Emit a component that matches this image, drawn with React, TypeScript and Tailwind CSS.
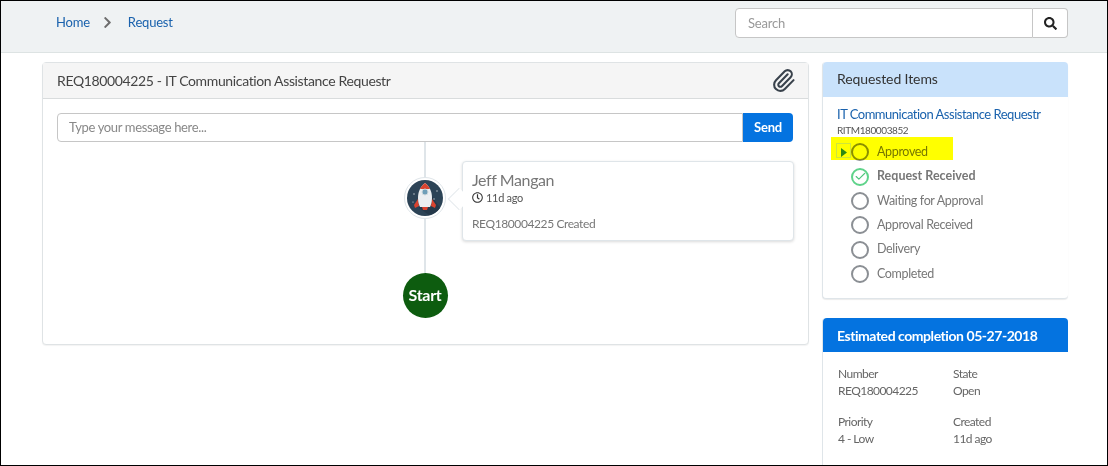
import { Paperclip, Check } from 'lucide-react'
import { FaChevronRight, FaRegClock, FaSearch } from 'react-icons/fa'

const font = "font-['Lato','Noto_Sans',sans-serif]"

const steps = [
  { label: 'Approved', state: 'current' },
  { label: 'Request Received', state: 'done' },
  { label: 'Waiting for Approval', state: 'todo' },
  { label: 'Approval Received', state: 'todo' },
  { label: 'Delivery', state: 'todo' },
  { label: 'Completed', state: 'todo' },
]

const details = [
  { label: 'Number', value: 'REQ180004225' },
  { label: 'State', value: 'Open' },
  { label: 'Priority', value: '4 - Low' },
  { label: 'Created', value: '11d ago' },
]

function Rocket() {
  return (
    <svg viewBox="0 0 36 36" className="h-[36px] w-[36px]">
      <circle cx="18" cy="18" r="18" fill="#2c4356" />
      <path d="M18 6 L33 28 A18 18 0 0 1 22 35 L12 28 Z" fill="#24384a" />
      <circle cx="7" cy="14" r="0.7" fill="#cfd8dc" />
      <circle cx="30" cy="11" r="0.7" fill="#cfd8dc" />
      <circle cx="27" cy="19" r="0.7" fill="#cfd8dc" />
      <circle cx="6" cy="22" r="0.6" fill="#cfd8dc" />
      <path d="M11 19 L7 25 L8 28 L12 26 Z" fill="#d9432f" />
      <path d="M25 19 L29 25 L28 28 L24 26 Z" fill="#d9432f" />
      <path d="M18 3 C13 7 11 12 11 18 C11 22 12 25 13 27 L23 27 C24 25 25 22 25 18 C25 12 23 7 18 3 Z" fill="#eceff1" />
      <path d="M18 3 C15.5 5 14 7 13 9 L23 9 C22 7 20.5 5 18 3 Z" fill="#d9432f" />
      <circle cx="18" cy="12" r="3" fill="#6f9fb8" stroke="#cfd8dc" strokeWidth="1" />
      <path d="M15 27 L21 27 L20 30 L16 30 Z" fill="#d9432f" />
    </svg>
  )
}

function StepIcon({ state }: { state: string }) {
  if (state === 'done') {
    return (
      <span className="flex h-[18px] w-[18px] items-center justify-center rounded-full border-2 border-[#5fd38a] bg-white">
        <Check className="h-[13px] w-[13px] text-[#4ec57b]" strokeWidth={2} />
      </span>
    )
  }
  return <span className="h-[18px] w-[18px] rounded-full border-2 border-[#8b8f94]" />
}

export default function App() {
  return (
    <div className={`${font} relative h-[466px] w-[1108px] overflow-hidden border border-black bg-white text-[#555]`}>
      {/* Top bar */}
      <header className="flex h-[52px] items-start justify-between border-b border-[#dde3e3] bg-[#eff2f3] pl-[55px] pr-[39px] pt-[7px]">
        <nav className="flex items-center pt-[5px] text-[13px] tracking-[-0.2px] text-[#1a62ad]">
          <span>Home</span>
          <FaChevronRight className="ml-[12px] mr-[15px] h-[13px] w-[11px] text-[#6d6d6d]" />
          <span>Request</span>
        </nav>
        <div className="flex h-[30px] w-[333px]">
          <div className="flex flex-1 items-center rounded-l-[4px] border border-[#c6c6c6] bg-white pl-[12px] pt-[1px] text-[13px] tracking-[-0.2px] text-[#999]">
            Search
          </div>
          <button className="flex w-[35px] items-center justify-center rounded-r-[4px] border border-l-0 border-[#c6c6c6] bg-white text-[#222]">
            <FaSearch className="h-[13px] w-[13px]" />
          </button>
        </div>
      </header>

      <main className="flex items-start pl-[41px] pt-[9px]">
        {/* Left panel */}
        <section className="h-[283px] w-[767px] rounded-[4px] border border-[#dfe3e5] bg-white shadow-[0_1px_1px_rgba(0,0,0,0.05)]">
          <div className="flex h-[36px] items-center justify-between border-b border-[#d9dcdd] bg-[#f5f5f5] pl-[14px] pr-[12px] text-[14px] tracking-[-0.36px] text-[#444]">
            <span>REQ180004225 - IT Communication Assistance Requestr</span>
            <Paperclip className="h-[25px] w-[25px] text-[#39424c]" strokeWidth={2} />
          </div>
          <div className="flex flex-col px-[14px] pt-[14px]">
            <div className="mr-[1px] flex h-[29px]">
              <div className="flex flex-1 items-center rounded-l-[4px] border border-[#c6c6c6] pl-[11px] text-[13px] tracking-[-0.35px] text-[#888]">
                Type your message here...
              </div>
              <button className="w-[50px] rounded-r-[4px] bg-[#0473e0] text-[13px] font-bold tracking-[-0.2px] text-white">Send</button>
            </div>
            {/* Timeline */}
            <div className="flex">
              <div className="flex w-[391px] shrink-0 flex-col items-end">
                <div className="flex w-[46px] flex-col items-center">
                  <div className="h-[35px] w-[2px] bg-[#dfe5e9]" />
                  <div className="flex h-[42px] w-[42px] items-center justify-center rounded-full border border-[#dfe5e9] bg-white">
                    <Rocket />
                  </div>
                  <div className="h-[54px] w-[2px] bg-[#dfe5e9]" />
                  <div className="flex h-[45px] w-[45px] items-center justify-center rounded-full bg-[#0d5c0f] pb-[1px] text-[16px] font-bold tracking-[-0.3px] text-white">
                    Start
                  </div>
                </div>
              </div>
              <div className="relative ml-[14px] mt-[19px] h-[80px] flex-1 rounded-[4px] border border-[#dfe5e9] bg-white pl-[9px] pt-[8px] shadow-[0_1px_3px_rgba(0,0,0,0.15)]">
                <span className="absolute left-[-12px] top-[29px] h-[16px] w-[16px] rotate-45 border-b border-l border-[#e6ebee] bg-white" />
                <div className="relative text-[16px] leading-[20px] tracking-[-0.4px] text-[#777]">Jeff Mangan</div>
                <div className="relative flex items-center gap-[3px] text-[11px] leading-[15px] tracking-[-0.3px] text-[#555]">
                  <FaRegClock className="h-[11px] w-[11px] text-[#333]" />
                  11d ago
                </div>
                <div className="relative mt-[11px] text-[12px] leading-[16px] tracking-[-0.4px] text-[#777]">REQ180004225 Created</div>
              </div>
            </div>
          </div>
        </section>

        {/* Right column */}
        <aside className="ml-[13px] flex w-[246px] flex-col gap-[19px]">
          <section className="h-[237px] rounded-[4px] border-b border-l border-[#dfe5e9] bg-white shadow-[0_1px_1px_rgba(0,0,0,0.08)]">
            <div className="flex h-[35px] items-center rounded-t-[4px] bg-[#c9e2fb] pb-[2px] pl-[14px] text-[14px] tracking-[-0.1px] text-[#333]">
              Requested Items
            </div>
            <div className="pl-[14px] pt-[9px]">
              <div className="text-[13px] leading-[16px] tracking-[-0.5px] text-[#1a62ad]">IT Communication Assistance Requestr</div>
              <div className="mt-[2px] text-[10px] leading-[12px] tracking-[-0.4px] text-[#555]">RITM180003852</div>
              <ul className="relative mt-[4px]">
                {steps.map((step) => (
                  <li key={step.label} className="flex h-[24.4px] items-center gap-[8px] pl-[14px] text-[12.5px] tracking-[-0.35px] text-[#777]">
                    <StepIcon state={step.state} />
                    <span className={step.state === 'done' ? 'font-bold tracking-normal' : ''}>{step.label}</span>
                  </li>
                ))}
              </ul>
            </div>
          </section>

          <section className="h-[150px] rounded-t-[4px] border-l border-[#dfe5e9]">
            <div className="flex h-[34px] items-center rounded-t-[4px] bg-[#0473e0] pl-[14px] text-[14px] font-bold tracking-[-0.45px] text-white">
              Estimated completion 05-27-2018
            </div>
            <div className="grid grid-cols-[115px_1fr] gap-y-[14px] pl-[15px] pt-[13px] text-[12px] leading-[17px] tracking-[-0.55px] text-[#666]">
              {details.map((d) => (
                <div key={d.label}>
                  <div>{d.label}</div>
                  <div>{d.value}</div>
                </div>
              ))}
            </div>
          </section>
        </aside>
      </main>

      {/* Yellow highlighter annotation, drawn over the Approved row */}
      <div className="absolute left-[830px] top-[136px] h-[23px] w-[122px] bg-[#ffff00] mix-blend-multiply" />
      <svg className="absolute left-[835px] top-[142px]" width="15" height="15" viewBox="0 0 15 15">
        <rect x="0.5" y="0.5" width="14" height="14" fill="none" stroke="#cfe63a" />
        <path d="M5 5 L11 9.5 L5 14 Z" fill="#2f8a12" />
      </svg>
    </div>
  )
}
